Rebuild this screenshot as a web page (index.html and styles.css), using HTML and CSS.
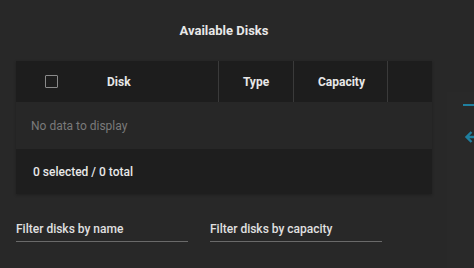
FILE: index.html
```html
<!DOCTYPE html>
<html>
<head>
<meta charset="utf-8">
<link rel="stylesheet" href="styles.css">
</head>
<body>
<div class="page">
  <div class="main">
    <div class="title">Available Disks</div>
    <div class="table">
      <div class="thead">
        <div class="cell c-check"><span class="checkbox"></span></div>
        <div class="cell c-disk">Disk</div>
        <div class="cell c-type">Type</div>
        <div class="cell c-cap">Capacity</div>
        <div class="cell c-last"></div>
      </div>
      <div class="tbody">No data to display</div>
      <div class="tfoot">0 selected / 0 total</div>
    </div>
    <div class="filters">
      <div class="filter">Filter disks by name</div>
      <div class="filter">Filter disks by capacity</div>
    </div>
  </div>
  <div class="side">
    <span class="side-line"></span>
    <svg class="side-arrow" width="12" height="14" viewBox="0 0 12 14"><path d="M12 7H4M7.5 2L2.5 7l5 5" fill="none" stroke="#1f7f9f" stroke-width="2.4"/></svg>
  </div>
</div>
</body>
</html>
```
FILE: styles.css
```css
html, body {
  margin: 0;
  padding: 0;
  background: #282828;
  font-family: Roboto, "Liberation Sans", sans-serif;
  color: #e6e6e6;
}
.page {
  width: 474px;
  height: 268px;
  position: relative;
  overflow: hidden;
}
.main {
  padding: 21px 0 0 16px;
  width: 416px;
}
.title {
  text-align: center;
  font-size: 13px;
  font-weight: 700;
  line-height: 20px;
  color: #e8e8e8;
}
.table {
  margin-top: 20px;
  width: 416px;
  box-shadow: 0 1px 3px rgba(0,0,0,0.25);
}
.thead {
  display: grid;
  grid-template-columns: 71px 132px 75px 94px 44px;
  height: 41px;
  background: #1d1d1d;
}
.cell {
  display: flex;
  align-items: center;
  font-size: 12px;
  font-weight: 700;
  color: #e8e8e8;
}
.c-check { justify-content: center; }
.c-disk { padding-left: 20px; border-right: 1px solid #3a3a3a; }
.c-type { justify-content: center; border-right: 1px solid #3a3a3a; }
.c-cap { justify-content: center; padding-left: 2px; border-right: 1px solid #3a3a3a; }
.checkbox {
  width: 11px;
  height: 11px;
  border: 1.5px solid #8a8a8a;
  border-radius: 1px;
}
.tbody {
  height: 47px;
  background: #272727;
  display: flex;
  align-items: center;
  padding-left: 15px;
  font-size: 12px;
  color: #7a7a7a;
}
.tfoot {
  height: 45px;
  background: #1e1e1e;
  display: flex;
  align-items: center;
  padding-left: 17px;
  font-size: 12px;
  font-weight: 500;
  color: #e8e8e8;
}
.filters {
  display: flex;
  gap: 22px;
  margin-top: 27px;
}
.filter {
  width: 172px;
  font-size: 12px;
  font-weight: 500;
  color: #e0e0e0;
  line-height: 16px;
  padding-bottom: 4px;
  border-bottom: 1px solid #6a6a6a;
}
.side {
  position: absolute;
  left: 447px;
  top: 92px;
  width: 27px;
  height: 176px;
  background: #292929;
}
.side-line {
  position: absolute;
  left: 16px;
  top: 12px;
  width: 11px;
  height: 2px;
  background: #1f7f9f;
}
.side-arrow {
  position: absolute;
  left: 17px;
  top: 38px;
}
```
